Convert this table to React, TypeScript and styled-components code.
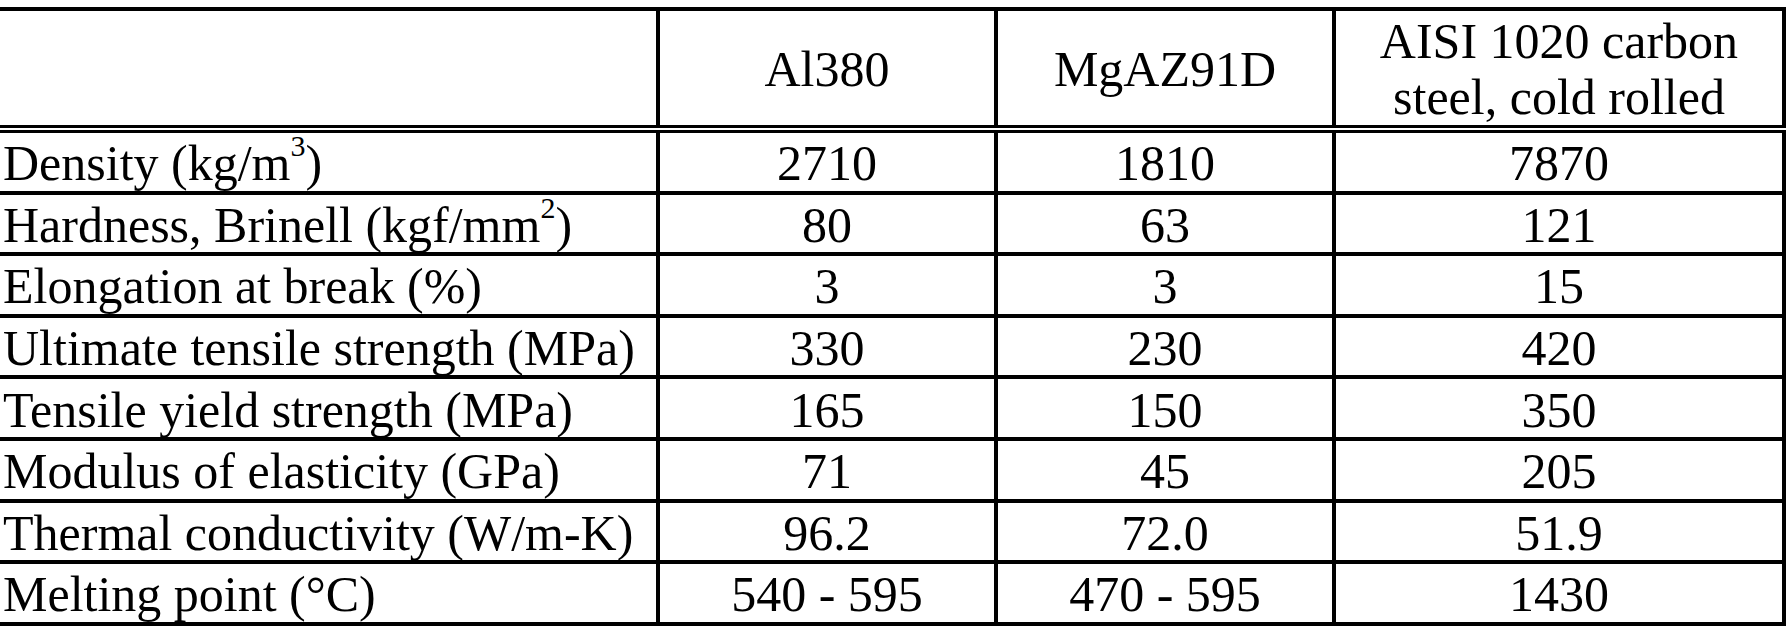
import React from "react";
import styled, { createGlobalStyle } from "styled-components";

const GlobalStyle = createGlobalStyle`
  html, body {
    margin: 0;
    padding: 0;
    background: #fff;
  }
`;

const Page = styled.div`
  padding-top: 7px;
`;

const Table = styled.table`
  border-collapse: collapse;
  table-layout: fixed;
  width: 1784px;
  font-family: "Liberation Serif", "Times New Roman", serif;
  font-size: 50px;
  color: #000;
  border-top: 4px solid #000;
  border-right: 4px solid #000;
`;

const HeadCell = styled.td`
  height: 110px;
  padding: 2px 0 0;
  text-align: center;
  vertical-align: middle;
  line-height: 1.12;
  border: 4px solid #000;
  border-bottom: 8px double #000;
  &:first-child {
    border-left: none;
  }
`;

const LabelCell = styled.td`
  height: 54.6px;
  padding: 3px 0 0 3px;
  text-align: left;
  vertical-align: middle;
  line-height: 1;
  white-space: nowrap;
  border: 4px solid #000;
  border-left: none;
`;

const ValueCell = styled.td`
  height: 54.6px;
  padding: 3px 0 0;
  text-align: center;
  vertical-align: middle;
  line-height: 1;
  border: 4px solid #000;
`;

const Sup = styled.sup`
  font-size: 0.6em;
  line-height: 0;
  vertical-align: 0.8em;
`;

type Row = { label: React.ReactNode; values: string[] };

const rows: Row[] = [
  { label: <>Density (kg/m<Sup>3</Sup>)</>, values: ["2710", "1810", "7870"] },
  {
    label: <>Hardness, Brinell (kgf/mm<Sup>2</Sup>)</>,
    values: ["80", "63", "121"],
  },
  { label: "Elongation at break (%)", values: ["3", "3", "15"] },
  { label: "Ultimate tensile strength (MPa)", values: ["330", "230", "420"] },
  { label: "Tensile yield strength (MPa)", values: ["165", "150", "350"] },
  { label: "Modulus of elasticity (GPa)", values: ["71", "45", "205"] },
  { label: "Thermal conductivity (W/m-K)", values: ["96.2", "72.0", "51.9"] },
  { label: "Melting point (°C)", values: ["540 - 595", "470 - 595", "1430"] },
];

const App = () => {
  return (
    <Page>
      <GlobalStyle />
      <Table>
        <colgroup>
          <col style={{ width: 658 }} />
          <col style={{ width: 338 }} />
          <col style={{ width: 338 }} />
          <col style={{ width: 450 }} />
        </colgroup>
        <thead>
          <tr>
            <HeadCell />
            <HeadCell>Al380</HeadCell>
            <HeadCell>MgAZ91D</HeadCell>
            <HeadCell>
              AISI 1020 carbon
              <br />
              steel, cold rolled
            </HeadCell>
          </tr>
        </thead>
        <tbody>
          {rows.map((row, i) => (
            <tr key={i}>
              <LabelCell>{row.label}</LabelCell>
              {row.values.map((v, j) => (
                <ValueCell key={j}>{v}</ValueCell>
              ))}
            </tr>
          ))}
        </tbody>
      </Table>
    </Page>
  );
};

export default App;
